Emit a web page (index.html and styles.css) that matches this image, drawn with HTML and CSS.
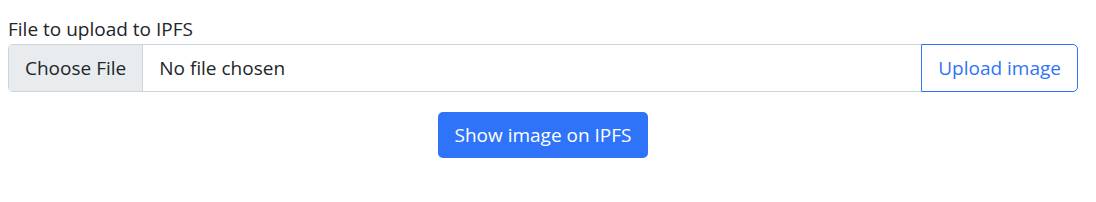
FILE: index.html
```html
<!DOCTYPE html>
<html lang="en">
<head>
  <meta charset="UTF-8" />
  <title>IPFS Upload</title>
  <link rel="stylesheet" href="styles.css">
</head>
<body>

<div class="page">
  <label class="form-label" for="file">File to upload to IPFS</label>

  <div class="input-group">
    <label class="file-input">
      <input type="file" id="file" />
      <span class="file-btn">Choose File</span>
      <span class="file-name">No file chosen</span>
    </label>
    <button class="btn btn-outline">Upload image</button>
  </div>

  <div class="actions">
    <button class="btn btn-primary">Show image on IPFS</button>
  </div>
</div>

</body>
</html>
```

FILE: styles.css
```css
html, body {
  margin: 0;
  padding: 0;
  background: #fff;
  color: #212529;
  font-family: 'Open Sans', 'Noto Sans', sans-serif;
  font-size: 19px;
}

.page {
  padding: 14px 18px 0 8px;
}

.form-label {
  display: block;
  line-height: 30px;
}

.input-group {
  display: flex;
  height: 48px;
}

.file-input {
  flex: 1;
  display: flex;
  align-items: stretch;
  border: 1px solid #ced4da;
  border-right: 0;
  border-radius: 5px 0 0 5px;
  overflow: hidden;
  cursor: pointer;
}

.file-input input {
  display: none;
}

.file-btn {
  display: flex;
  align-items: center;
  padding: 0 16px;
  background: #e9ecef;
  border-right: 1px solid #ced4da;
}

.file-name {
  display: flex;
  align-items: center;
  padding: 0 16px;
}

.btn {
  font-family: inherit;
  font-size: 19px;
  padding: 0 16px;
  border-radius: 5px;
  cursor: pointer;
}

.btn-outline {
  background: #fff;
  color: #2f74f8;
  border: 1px solid #2f74f8;
  border-radius: 0 5px 5px 0;
}

.actions {
  display: flex;
  justify-content: center;
  margin-top: 20px;
}

.btn-primary {
  height: 46px;
  background: #2f74f8;
  color: #fff;
  border: 0;
}
```
